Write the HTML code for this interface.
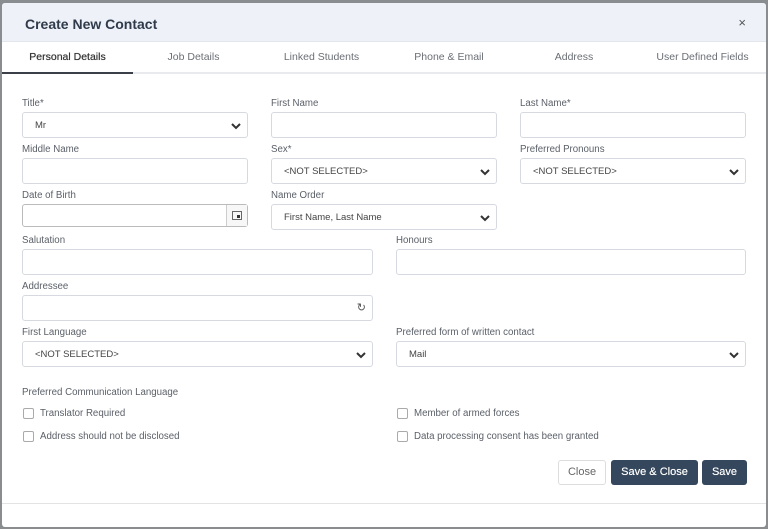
<!DOCTYPE html><html><head><style>
*{box-sizing:border-box;margin:0;padding:0}
body{width:768px;height:529px;background:#8a8d90;font-family:"Liberation Sans",sans-serif;position:relative;overflow:hidden}
.m{position:absolute;left:2px;top:3px;width:764px;height:524px;background:#fff;border-radius:3px;overflow:hidden}
.hd{position:absolute;left:0;top:0;width:100%;height:39px;background:#eef2f8;border-bottom:1px solid #e3e7ec}
.hd b{position:absolute;left:23px;top:13px;font-size:14px;color:#2f3a4a;font-weight:bold}
.x{position:absolute;right:20px;top:12px;font-size:13px;color:#555}
.tab{position:absolute;top:48px;font-size:10.5px;color:#6b6f75;text-align:center}
.ul{position:absolute;top:69px;height:2px;background:#e8eaed;left:0;width:100%}
.l{position:absolute;font-size:9.7px;color:#5b6068}
.i{position:absolute;height:26px;border:1px solid #d6dae0;border-radius:3px;background:#fff;font-size:9.5px;color:#444;padding:7px 0 0 12px}
.i svg{position:absolute;right:6px;top:9px}
.cb{position:absolute;width:11px;height:11px;border:1px solid #aaa;border-radius:2px}
.b{position:absolute;top:457px;height:25px;border-radius:3px;font-size:11px;color:#fff;background:#35475c;text-align:center;line-height:25px;text-shadow:0 0 0.4px #fff}
</style></head><body><div class="m">
<div class="hd"><b>Create New Contact</b><span class="x">×</span></div>
<div class="ul"></div><div style="position:absolute;left:0;top:69px;width:131px;height:2px;background:#3b4048"></div>
<div class="tab" style="left:0;width:131px;color:#333;text-shadow:0 0 0.5px #333">Personal Details</div>
<div class="tab" style="left:131px;width:121px">Job Details</div>
<div class="tab" style="left:252px;width:135px">Linked Students</div>
<div class="tab" style="left:387px;width:120px">Phone &amp; Email</div>
<div class="tab" style="left:507px;width:130px">Address</div>
<div class="tab" style="left:637px;width:127px">User Defined Fields</div>

<div class="l" style="left:20px;top:95px">Title*</div>
<div class="i" style="left:20px;top:109px;width:226px">Mr<svg width="10" height="8"><path d="M1 2l4 4 4-4" stroke="#333" stroke-width="2" fill="none"/></svg></div>
<div class="l" style="left:269px;top:95px">First Name</div>
<div class="i" style="left:269px;top:109px;width:226px"></div>
<div class="l" style="left:518px;top:95px">Last Name*</div>
<div class="i" style="left:518px;top:109px;width:226px"></div>

<div class="l" style="left:20px;top:141px">Middle Name</div>
<div class="i" style="left:20px;top:155px;width:226px"></div>
<div class="l" style="left:269px;top:141px">Sex*</div>
<div class="i" style="left:269px;top:155px;width:226px">&lt;NOT SELECTED&gt;<svg width="10" height="8"><path d="M1 2l4 4 4-4" stroke="#333" stroke-width="2" fill="none"/></svg></div>
<div class="l" style="left:518px;top:141px">Preferred Pronouns</div>
<div class="i" style="left:518px;top:155px;width:226px">&lt;NOT SELECTED&gt;<svg width="10" height="8"><path d="M1 2l4 4 4-4" stroke="#333" stroke-width="2" fill="none"/></svg></div>

<div class="l" style="left:20px;top:187px">Date of Birth</div>
<div class="i" style="left:20px;top:201px;width:226px;height:23px;border-color:#bbb"><div style="position:absolute;right:0;top:0;width:21px;height:21px;border-left:1px solid #ccc;background:#f7f7f7"><svg style="right:5px;top:5px" width="10" height="10"><rect x="0.5" y="1.5" width="9" height="8" fill="none" stroke="#666"/><rect x="5" y="5" width="3" height="3" fill="#333"/></svg></div></div>
<div class="l" style="left:269px;top:187px">Name Order</div>
<div class="i" style="left:269px;top:201px;width:226px">First Name, Last Name<svg width="10" height="8"><path d="M1 2l4 4 4-4" stroke="#333" stroke-width="2" fill="none"/></svg></div>

<div class="l" style="left:20px;top:232px">Salutation</div>
<div class="i" style="left:20px;top:246px;width:351px"></div>
<div class="l" style="left:394px;top:232px">Honours</div>
<div class="i" style="left:394px;top:246px;width:350px"></div>

<div class="l" style="left:20px;top:278px">Addressee</div>
<div class="i" style="left:20px;top:292px;width:351px"><span style="position:absolute;right:6px;top:5px;font-size:11px;color:#555">↻</span></div>

<div class="l" style="left:20px;top:324px">First Language</div>
<div class="i" style="left:20px;top:338px;width:351px">&lt;NOT SELECTED&gt;<svg width="10" height="8"><path d="M1 2l4 4 4-4" stroke="#333" stroke-width="2" fill="none"/></svg></div>
<div class="l" style="left:394px;top:324px">Preferred form of written contact</div>
<div class="i" style="left:394px;top:338px;width:350px">Mail<svg width="10" height="8"><path d="M1 2l4 4 4-4" stroke="#333" stroke-width="2" fill="none"/></svg></div>

<div class="l" style="left:20px;top:384px">Preferred Communication Language</div>
<div class="cb" style="left:21px;top:405px"></div><div class="l" style="left:38px;top:405px">Translator Required</div>
<div class="cb" style="left:21px;top:428px"></div><div class="l" style="left:38px;top:428px">Address should not be disclosed</div>
<div class="cb" style="left:395px;top:405px"></div><div class="l" style="left:412px;top:405px">Member of armed forces</div>
<div class="cb" style="left:395px;top:428px"></div><div class="l" style="left:412px;top:428px">Data processing consent has been granted</div>

<div class="b" style="left:556px;width:48px;background:#fff;border:1px solid #ddd;color:#666;text-shadow:none;line-height:23px">Close</div>
<div class="b" style="left:609px;width:87px">Save &amp; Close</div>
<div class="b" style="left:700px;width:45px">Save</div>
<div style="position:absolute;left:0;top:500px;width:100%;height:1px;background:#e3e3e3"></div>
</div></body></html>
